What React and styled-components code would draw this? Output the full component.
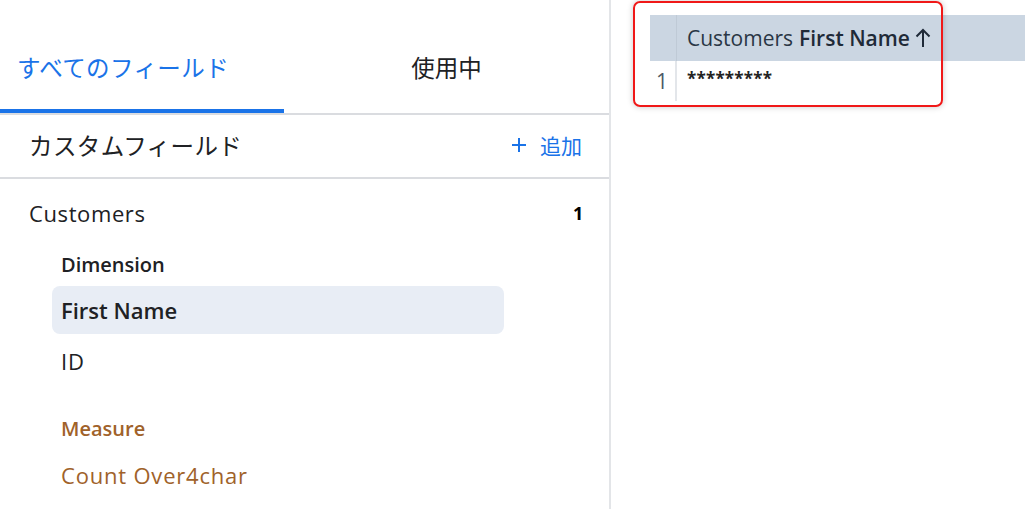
import React from "react";
import styled, { createGlobalStyle } from "styled-components";

const Global = createGlobalStyle`
  html, body { margin: 0; padding: 0; background: #fff; }
  body { font-family: "Open Sans", "Noto Sans CJK JP", "Noto Sans", sans-serif; color: #202124; }
`;

const Page = styled.div`
  display: flex;
  width: 1025px;
  height: 509px;
  overflow: hidden;
`;

const LeftPanel = styled.div`
  width: 609px;
  flex: none;
  border-right: 2px solid #e3e5e8;
  display: flex;
  flex-direction: column;
`;

const TabBar = styled.div`
  display: flex;
  height: 113px;
  border-bottom: 2px solid #dadce0;
`;

const Tab = styled.div`
  box-sizing: border-box;
  display: flex;
  align-items: center;
  ${(p) => (p.$width ? `width: ${p.$width}px; flex: none;` : "flex: 1;")}
  justify-content: ${(p) => (p.$center ? "center" : "flex-start")};
  padding-left: ${(p) => (p.$center ? 0 : 17)}px;
  padding-top: 24px;
  font-size: 23.5px;
  letter-spacing: ${(p) => (p.$center ? 0 : 0.4)}px;
  color: ${(p) => (p.$active ? "#1a73e8" : "#202124")};
  border-bottom: 4px solid ${(p) => (p.$active ? "#1a73e8" : "transparent")};
`;

const SectionRow = styled.div`
  box-sizing: border-box;
  display: flex;
  align-items: center;
  justify-content: space-between;
  height: 64px;
  padding: 0 27px 3px 29px;
  border-bottom: 2px solid #dadce0;
  font-size: 23.5px;
  letter-spacing: 0.4px;
`;

const AddButton = styled.div`
  display: flex;
  align-items: center;
  gap: 14px;
  color: #1a73e8;
  font-size: 21px;
  letter-spacing: 0;
`;

const Group = styled.div`
  display: flex;
  flex-direction: column;
  padding-top: 17px;
`;

const GroupHeader = styled.div`
  display: flex;
  align-items: center;
  justify-content: space-between;
  height: 34px;
  padding: 0 25px 0 29px;
  font-size: 22px;
  letter-spacing: 0.6px;
  color: #202124;
`;

const Count = styled.span`
  font-size: 18px;
  font-weight: 700;
  color: #000;
`;

const Category = styled.div`
  margin: ${(p) => p.$mt || 0}px 0 0 61px;
  height: 36px;
  display: flex;
  align-items: center;
  font-size: 20px;
  font-weight: 600;
  color: ${(p) => p.$color};
`;

const Field = styled.div`
  box-sizing: border-box;
  width: 452px;
  height: 48px;
  margin: ${(p) => p.$mt || 0}px 0 0 52px;
  padding-left: 9px;
  display: flex;
  align-items: center;
  border-radius: 8px;
  font-size: 22px;
  letter-spacing: ${(p) => (p.$selected ? 0 : 0.8)}px;
  font-weight: ${(p) => (p.$selected ? 600 : 400)};
  background: ${(p) => (p.$selected ? "#e8edf5" : "transparent")};
  color: ${(p) => p.$color};
`;

const RightPanel = styled.div`
  flex: 1;
  position: relative;
  padding: 15px 0 0 39px;
`;

const Table = styled.div`
  display: grid;
  grid-template-columns: 27px 1fr;
`;

const HeadCell = styled.div`
  height: 46px;
  background: #cbd6e2;
  display: flex;
  align-items: center;
  font-size: 21px;
  color: #2a3645;
  white-space: nowrap;
  padding-left: ${(p) => p.$pl || 0}px;
  border-right: ${(p) => (p.$divider ? "1px solid #bfcad6" : "none")};
`;

const Strong = styled.b`
  font-weight: 600;
  color: #1f2a38;
  margin-left: 6px;
`;

const RowNum = styled.div`
  height: 40px;
  display: flex;
  align-items: center;
  justify-content: flex-end;
  padding-right: 7px;
  font-size: 21px;
  color: #4d5966;
  border-right: 2px solid #e3e6ea;
`;

const Cell = styled.div`
  height: 40px;
  padding: 6px 0 0 10px;
  box-sizing: border-box;
  font-size: 17px;
  font-weight: 700;
  letter-spacing: 0.2px;
  color: #222;
`;

const Highlight = styled.div`
  position: absolute;
  left: 22px;
  top: 1px;
  width: 306px;
  height: 102px;
  border: 2px solid #f01818;
  border-radius: 7px;
  box-shadow: 0 0 6px rgba(0, 0, 0, 0.22);
  pointer-events: none;
`;

export default function App() {
  return (
    <>
      <Global />
      <Page>
        <LeftPanel>
          <TabBar>
            <Tab $active $width={284}>すべてのフィールド</Tab>
            <Tab $center>使用中</Tab>
          </TabBar>
          <SectionRow>
            <span>カスタムフィールド</span>
            <AddButton>
              <svg width="14" height="14" viewBox="0 0 14 14">
                <path d="M7 0v14M0 7h14" stroke="#1a73e8" strokeWidth="2" />
              </svg>
              <span>追加</span>
            </AddButton>
          </SectionRow>
          <Group>
            <GroupHeader>
              <span>Customers</span>
              <Count>1</Count>
            </GroupHeader>
            <Category $mt={16} $color="#202124">Dimension</Category>
            <Field $mt={4} $selected $color="#202124">First Name</Field>
            <Field $mt={3} $color="#202124">ID</Field>
            <Category $mt={25} $color="#a0622a">Measure</Category>
            <Field $mt={5} $color="#a0622a">Count Over4char</Field>
          </Group>
        </LeftPanel>
        <RightPanel>
          <Table>
            <HeadCell $divider />
            <HeadCell $pl={10}>
              Customers<Strong>First Name</Strong>
              <svg width="16" height="20" viewBox="0 0 16 20" style={{ marginLeft: 5 }}>
                <path d="M8 19V2M1.5 8.5L8 2l6.5 6.5" stroke="#1f2a38" strokeWidth="2" fill="none" />
              </svg>
            </HeadCell>
            <RowNum>1</RowNum>
            <Cell>*********</Cell>
          </Table>
          <Highlight />
        </RightPanel>
      </Page>
    </>
  );
}
